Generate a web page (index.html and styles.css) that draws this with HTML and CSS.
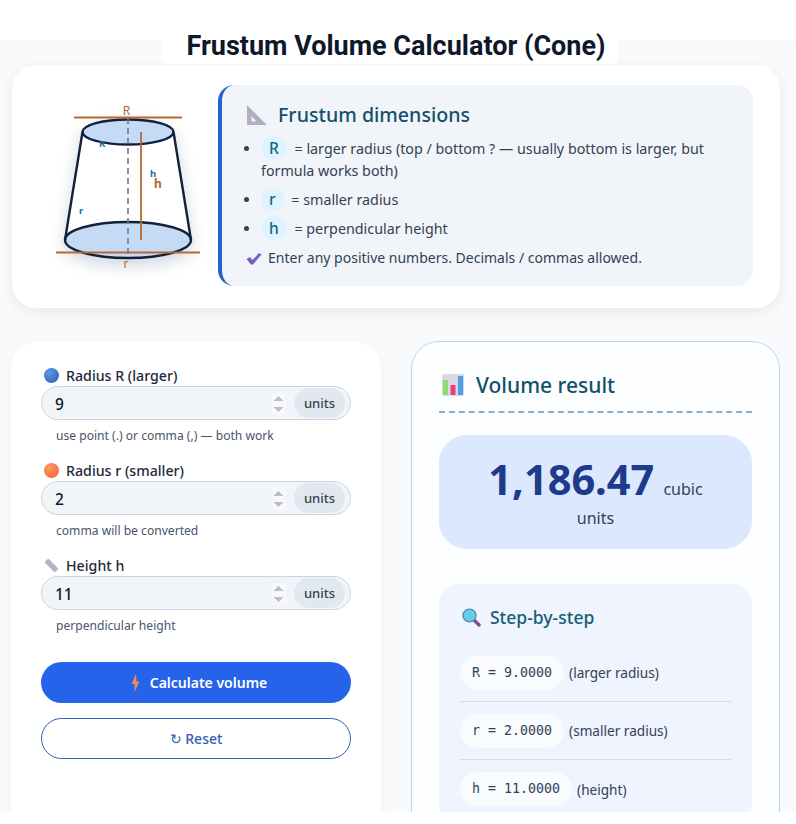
FILE: index.html

```html
<!DOCTYPE html>
<html>
<head>
  <title>Frustum Volume Calculator (Cone)</title>
  <link rel="stylesheet" href="styles.css">
</head>
<body>
  <div class="title-row">
    <h1>Frustum Volume Calculator (Cone)</h1>
  </div>

  <div class="app">
    <div class="top-card">
      <svg class="diagram" width="170" height="186" viewBox="0 0 170 186">
        <g class="cone">
          <path class="cone-fill" d="M42.5 42 L25 150 A63 18 0 0 0 151 150 L133.5 42 Z"/>
          <ellipse class="cap" cx="88" cy="150" rx="63" ry="18"/>
          <ellipse class="cap" cx="88" cy="42" rx="45.5" ry="12.5"/>
          <line class="side" x1="42.5" y1="42" x2="25" y2="150"/>
          <line class="side" x1="133.5" y1="42" x2="151" y2="150"/>
        </g>
        <line class="axis" x1="88" y1="28" x2="88" y2="168"/>
        <line class="measure" x1="34" y1="27.5" x2="142" y2="27.5"/>
        <line class="measure" x1="16" y1="162.5" x2="160" y2="162.5"/>
        <line class="measure" x1="101" y1="42" x2="101" y2="150"/>
        <text class="lbl-orange" x="86.5" y="25" text-anchor="middle">R</text>
        <text class="lbl-orange" x="86" y="178" text-anchor="middle">r</text>
        <text class="lbl-orange lbl-bold" x="114" y="98">h</text>
        <text class="lbl-blue" x="110" y="87">h</text>
        <text class="lbl-blue" x="59" y="57">R</text>
        <text class="lbl-blue" x="39" y="124">r</text>
      </svg>

      <div class="info">
        <h3>
          <svg class="info-icon" width="22" height="22" viewBox="0 0 22 22"><path fill-rule="evenodd" d="M1 1 L21 21 H1 Z M5.5 12 V17.5 H10.5 Z" fill="#b3afc2"/></svg>
          Frustum dimensions
        </h3>
        <ul>
          <li><span class="sym">R</span> = larger radius (top / bottom ? — usually bottom is larger, but formula works both)</li>
          <li><span class="sym">r</span> = smaller radius</li>
          <li><span class="sym">h</span> = perpendicular height</li>
        </ul>
        <p class="note">
          <svg width="16" height="13" viewBox="0 0 16 13"><path d="M0.5 7 L4 5 L6.5 8 L13 1 L15.5 2.5 L7 12.5 H5 Z" fill="#7b5fc0"/></svg>
          Enter any positive numbers. Decimals / commas allowed.
        </p>
      </div>
    </div>

    <div class="columns">
      <div class="panel form-panel">
        <div class="field">
          <label><span class="dot dot-blue"></span>Radius R (larger)</label>
          <div class="input-wrap">
            <input type="number" value="9">
            <span class="unit">units</span>
          </div>
          <div class="hint">use point (.) or comma (,) — both work</div>
        </div>
        <div class="field">
          <label><span class="dot dot-orange"></span>Radius r (smaller)</label>
          <div class="input-wrap">
            <input type="number" value="2">
            <span class="unit">units</span>
          </div>
          <div class="hint">comma will be converted</div>
        </div>
        <div class="field">
          <label>
            <svg class="dot" width="14" height="14" viewBox="0 0 14 14"><path d="M3.5 0 L14 10.5 L10.5 14 L0 3.5 Z" fill="#b6b2c4"/></svg>
            Height h
          </label>
          <div class="input-wrap">
            <input type="number" value="11">
            <span class="unit">units</span>
          </div>
          <div class="hint">perpendicular height</div>
        </div>
        <button class="btn btn-primary">
          <svg width="9" height="18" viewBox="0 0 9 18"><path d="M5 0 L0.5 10 H3.5 L3.5 18 L8.5 7.5 H5.5 Z" fill="#f08a5d"/></svg>
          Calculate volume
        </button>
        <button class="btn btn-outline">↻ Reset</button>
      </div>

      <div class="panel result-panel">
        <h2>
          <svg width="22" height="22" viewBox="0 0 22 22">
            <rect width="22" height="22" rx="2" fill="#dcd8e2"/>
            <rect x="1" y="6" width="5" height="15" fill="#8fdc77"/>
            <rect x="8.5" y="11" width="5" height="10" fill="#e8417f"/>
            <rect x="16" y="2" width="5" height="19" fill="#4aa3e8"/>
          </svg>
          Volume result
        </h2>
        <div class="result-box">
          <span class="result-num">1,186.47</span> <span class="result-unit">cubic units</span>
        </div>
        <div class="steps">
          <h4>
            <svg width="19" height="19" viewBox="0 0 19 19">
              <line x1="11" y1="11" x2="17" y2="17" stroke="#8a4a8f" stroke-width="3.4" stroke-linecap="round"/>
              <circle cx="7.5" cy="7.5" r="6.5" fill="#63cdea" stroke="#4a7f9c" stroke-width="1.2"/>
            </svg>
            Step-by-step
          </h4>
          <div class="step"><code>R = 9.0000</code> (larger radius)</div>
          <div class="step"><code>r = 2.0000</code> (smaller radius)</div>
          <div class="step"><code>h = 11.0000</code> (height)</div>
        </div>
      </div>
    </div>
  </div>
</body>
</html>
```

FILE: styles.css

```css
* {
  box-sizing: border-box;
}

html, body {
  height: 100%;
  margin: 0;
  overflow: hidden;
}

body {
  font-family: "Noto Sans", "Open Sans", sans-serif;
  background-color: #fff;
  color: #1e293b;
  padding-top: 28px;
}

.title-row {
  display: flex;
  justify-content: center;
  height: 36px;
  margin-bottom: -24px;
  padding-right: 16px;
  position: relative;
  z-index: 1;
}

h1 {
  margin: 0;
  background-color: #fff;
  padding: 0 13px 0 25px;
  border-radius: 0 0 8px 8px;
  font-family: Roboto, sans-serif;
  font-size: 27px;
  font-weight: 700;
  line-height: 36px;
  color: #0f172a;
  white-space: nowrap;
}

.app {
  height: 772px;
  overflow: hidden;
  background-color: #f8fafc;
  padding: 25px 16px 0 12px;
}

.top-card {
  display: flex;
  align-items: flex-start;
  gap: 8px;
  height: 243px;
  padding: 20px 27px 22px 28px;
  background-color: #fff;
  border-radius: 24px;
  box-shadow: 0 4px 14px rgba(15, 23, 42, 0.07);
}

.diagram {
  flex: none;
  margin-top: 5px;
}

.cone {
  filter: drop-shadow(0 6px 8px rgba(30, 60, 110, 0.22));
}

.cone-fill {
  fill: #fff;
}

.cap {
  fill: #c5daf5;
  stroke: #14213d;
  stroke-width: 2.4;
}

.side {
  stroke: #14213d;
  stroke-width: 2.4;
}

.axis {
  stroke: #64789b;
  stroke-width: 1.6;
  stroke-dasharray: 6 4;
}

.measure {
  stroke: #b8692f;
  stroke-width: 1.8;
}

.diagram text {
  font-family: "Noto Sans", sans-serif;
}

.lbl-orange {
  fill: #b8692f;
  font-size: 12px;
}

.lbl-bold {
  font-weight: 700;
}

.lbl-blue {
  fill: #1f6a96;
  font-size: 9.5px;
  font-weight: 700;
}

.info {
  flex: 1;
  height: 201px;
  padding: 17px 24px 0 24px;
  background-color: #f1f5f9;
  border-left: 4px solid #2563c9;
  border-radius: 16px;
}

.info h3 {
  display: flex;
  align-items: center;
  gap: 10px;
  margin: 0;
  font-size: 19.6px;
  font-weight: 500;
  line-height: 26px;
  color: #12506b;
}

.info ul {
  margin: 8px 0 0;
  padding: 0 0 0 15px;
  font-size: 14.3px;
  line-height: 22px;
  color: #334155;
}

.info li {
  margin-bottom: 5px;
}

.sym {
  display: inline-block;
  margin-right: 4px;
  padding: 1px 8px;
  background-color: #e0f2fe;
  border-radius: 14px;
  font-size: 15.5px;
  font-weight: 500;
  color: #0f6a8a;
}

.note {
  display: flex;
  align-items: center;
  gap: 6px;
  margin: 8px 0 0;
  font-size: 14px;
  line-height: 20px;
  color: #334155;
}

.columns {
  display: grid;
  grid-template-columns: 370px 369px;
  gap: 30px;
  margin: 33px 0 0 -1px;
  height: 480px;
}

.panel {
  height: 540px;
  background-color: #fff;
  border-radius: 28px;
}

.form-panel {
  padding: 26px 30px 0;
  box-shadow: 0 2px 10px rgba(15, 23, 42, 0.03);
}

.field {
  height: 95px;
}

.field label {
  display: flex;
  align-items: center;
  gap: 7px;
  padding: 0 0 2px 3px;
  height: 19px;
  font-size: 14.2px;
  font-weight: 500;
  color: #1e293b;
}

.dot {
  display: inline-block;
  flex: none;
  width: 15px;
  height: 15px;
  border-radius: 50%;
}

.dot-blue {
  background: radial-gradient(circle at 35% 30%, #5b97e6, #2e5db0);
}

.dot-orange {
  background: radial-gradient(circle at 35% 30%, #ff9a5c, #ee5f3a);
}

.input-wrap {
  display: flex;
  align-items: center;
  height: 34px;
  padding-right: 5px;
  background-color: #f1f5f9;
  border: 1px solid #cbd5e1;
  border-radius: 17px;
}

.input-wrap input {
  flex: 1;
  min-width: 0;
  height: 32px;
  padding: 1px 8px 0 13px;
  border: 0;
  outline: 0;
  background: transparent;
  font-family: inherit;
  font-size: 15.5px;
  font-weight: 500;
  color: #0f172a;
}

.input-wrap input::-webkit-inner-spin-button {
  opacity: 0.5;
}

.unit {
  flex: none;
  width: 51px;
  height: 30px;
  background-color: #e2e8f0;
  border-radius: 15px;
  font-size: 13px;
  font-weight: 500;
  line-height: 30px;
  text-align: center;
  color: #334155;
}

.hint {
  padding: 8px 0 0 15px;
  font-size: 12.1px;
  line-height: 16px;
  color: #475569;
}

.btn {
  display: flex;
  align-items: center;
  justify-content: center;
  width: 310px;
  height: 41px;
  font-family: inherit;
  border-radius: 21px;
  font-size: 14px;
}

.btn-primary {
  gap: 10px;
  margin-top: 10px;
  padding-left: 12px;
  border: 0;
  background-color: #2563eb;
  font-weight: 600;
  color: #fff;
}

.btn-outline {
  margin-top: 15px;
  border: 1px solid #2f62b5;
  background-color: #fff;
  font-weight: 500;
  color: #2f62b5;
}

.result-panel {
  padding: 30px 27px 0;
  border: 1px solid #bdd5ec;
  background-color: #fdfeff;
}

.result-panel h2 {
  display: flex;
  align-items: center;
  gap: 12px;
  height: 41px;
  margin: 0;
  padding: 0 0 13px 3px;
  border-bottom: 2px dashed #8badc8;
  font-size: 21px;
  font-weight: 500;
  color: #12506b;
}

.result-box {
  height: 114px;
  margin-top: 22px;
  padding: 16px 36px 0;
  background-color: #dbe8fd;
  border-radius: 28px;
  text-align: center;
  line-height: 22px;
}

.result-num {
  font-size: 41.5px;
  font-weight: 700;
  line-height: 56px;
  color: #1e3a8a;
}

.result-unit {
  margin-left: 5px;
  font-size: 16px;
  color: #334155;
}

.steps {
  margin-top: 35px;
  height: 240px;
  padding: 20px 21px 0;
  background-color: #eff4fe;
  border-radius: 20px;
}

.steps h4 {
  display: flex;
  align-items: center;
  gap: 9px;
  margin: 0 0 14px;
  padding-left: 2px;
  height: 26px;
  font-size: 17.5px;
  font-weight: 500;
  color: #155e75;
}

.step {
  display: flex;
  align-items: center;
  gap: 5px;
  height: 58px;
  border-bottom: 1px solid #cfdced;
  font-size: 13.6px;
  color: #334155;
}

.step:last-child {
  border-bottom: 0;
}

.step code {
  padding: 0 12px;
  height: 34px;
  background-color: #f9fbff;
  border-radius: 17px;
  font-family: "DejaVu Sans Mono", monospace;
  font-size: 13.3px;
  line-height: 34px;
  color: #334155;
}
```
